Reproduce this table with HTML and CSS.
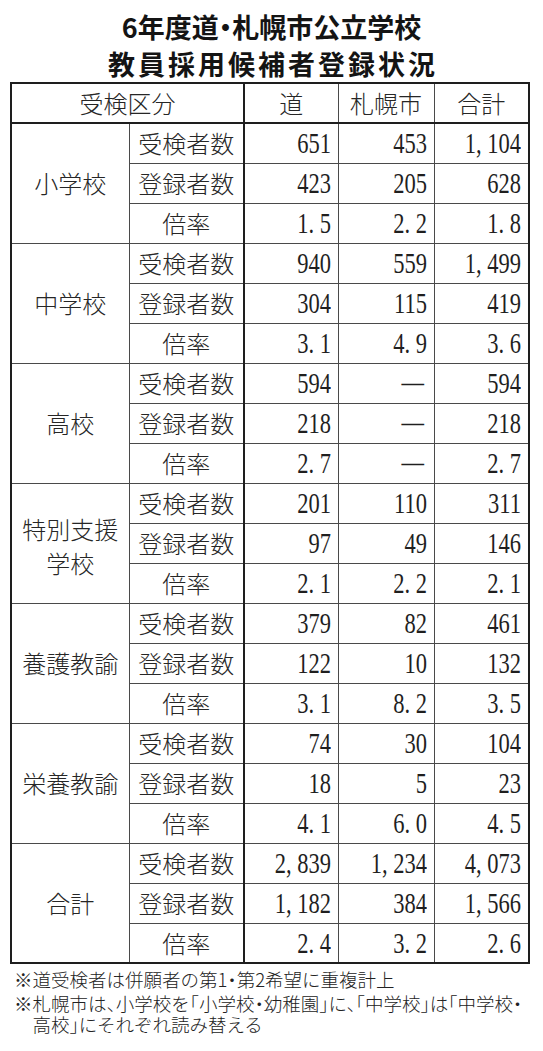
FILE: index.html
```html
<!DOCTYPE html>
<html lang="ja">
<head>
<meta charset="utf-8">
<title>6年度道・札幌市公立学校 教員採用候補者登録状況</title>
<link rel="stylesheet" href="styles.css">
</head>
<body>
<h1 class="title">
  <span class="title-line">6年度道・札幌市公立学校</span>
  <span class="title-line wide">教員採用候補者登録状況</span>
</h1>

<table class="stats">
  <colgroup>
    <col class="c-cat"><col class="c-sub"><col class="c-do"><col class="c-city"><col class="c-sum">
  </colgroup>
  <thead>
    <tr><th colspan="2">受検区分</th><th>道</th><th>札幌市</th><th>合計</th></tr>
  </thead>
  <tbody>
    <tr><th rowspan="3" class="cat">小学校</th><th class="sub">受検者数</th><td><span class="n">651</span></td><td><span class="n">453</span></td><td><span class="n">1<span class="p">,</span>104</span></td></tr>
    <tr><th class="sub">登録者数</th><td><span class="n">423</span></td><td><span class="n">205</span></td><td><span class="n">628</span></td></tr>
    <tr><th class="sub">倍率</th><td><span class="n">1<span class="p">.</span>5</span></td><td><span class="n">2<span class="p">.</span>2</span></td><td><span class="n">1<span class="p">.</span>8</span></td></tr>
  </tbody>
  <tbody>
    <tr><th rowspan="3" class="cat">中学校</th><th class="sub">受検者数</th><td><span class="n">940</span></td><td><span class="n">559</span></td><td><span class="n">1<span class="p">,</span>499</span></td></tr>
    <tr><th class="sub">登録者数</th><td><span class="n">304</span></td><td><span class="n">115</span></td><td><span class="n">419</span></td></tr>
    <tr><th class="sub">倍率</th><td><span class="n">3<span class="p">.</span>1</span></td><td><span class="n">4<span class="p">.</span>9</span></td><td><span class="n">3<span class="p">.</span>6</span></td></tr>
  </tbody>
  <tbody>
    <tr><th rowspan="3" class="cat">高校</th><th class="sub">受検者数</th><td><span class="n">594</span></td><td class="none"><span class="n dash">—</span></td><td><span class="n">594</span></td></tr>
    <tr><th class="sub">登録者数</th><td><span class="n">218</span></td><td class="none"><span class="n dash">—</span></td><td><span class="n">218</span></td></tr>
    <tr><th class="sub">倍率</th><td><span class="n">2<span class="p">.</span>7</span></td><td class="none"><span class="n dash">—</span></td><td><span class="n">2<span class="p">.</span>7</span></td></tr>
  </tbody>
  <tbody>
    <tr><th rowspan="3" class="cat cat-two">特別支援<br>学校</th><th class="sub">受検者数</th><td><span class="n">201</span></td><td><span class="n">110</span></td><td><span class="n">311</span></td></tr>
    <tr><th class="sub">登録者数</th><td><span class="n">97</span></td><td><span class="n">49</span></td><td><span class="n">146</span></td></tr>
    <tr><th class="sub">倍率</th><td><span class="n">2<span class="p">.</span>1</span></td><td><span class="n">2<span class="p">.</span>2</span></td><td><span class="n">2<span class="p">.</span>1</span></td></tr>
  </tbody>
  <tbody>
    <tr><th rowspan="3" class="cat">養護教諭</th><th class="sub">受検者数</th><td><span class="n">379</span></td><td><span class="n">82</span></td><td><span class="n">461</span></td></tr>
    <tr><th class="sub">登録者数</th><td><span class="n">122</span></td><td><span class="n">10</span></td><td><span class="n">132</span></td></tr>
    <tr><th class="sub">倍率</th><td><span class="n">3<span class="p">.</span>1</span></td><td><span class="n">8<span class="p">.</span>2</span></td><td><span class="n">3<span class="p">.</span>5</span></td></tr>
  </tbody>
  <tbody>
    <tr><th rowspan="3" class="cat">栄養教諭</th><th class="sub">受検者数</th><td><span class="n">74</span></td><td><span class="n">30</span></td><td><span class="n">104</span></td></tr>
    <tr><th class="sub">登録者数</th><td><span class="n">18</span></td><td><span class="n">5</span></td><td><span class="n">23</span></td></tr>
    <tr><th class="sub">倍率</th><td><span class="n">4<span class="p">.</span>1</span></td><td><span class="n">6<span class="p">.</span>0</span></td><td><span class="n">4<span class="p">.</span>5</span></td></tr>
  </tbody>
  <tbody>
    <tr><th rowspan="3" class="cat">合計</th><th class="sub">受検者数</th><td><span class="n">2<span class="p">,</span>839</span></td><td><span class="n">1<span class="p">,</span>234</span></td><td><span class="n">4<span class="p">,</span>073</span></td></tr>
    <tr><th class="sub">登録者数</th><td><span class="n">1<span class="p">,</span>182</span></td><td><span class="n">384</span></td><td><span class="n">1<span class="p">,</span>566</span></td></tr>
    <tr><th class="sub">倍率</th><td><span class="n">2<span class="p">.</span>4</span></td><td><span class="n">3<span class="p">.</span>2</span></td><td><span class="n">2<span class="p">.</span>6</span></td></tr>
  </tbody>
</table>

<div class="notes">
  <p class="note">※道受検者は併願者の第1・第2希望に重複計上</p>
  <p class="note">※札幌市は、小学校を「小学校・幼稚園」に、「中学校」は「中学校・<br>高校」にそれぞれ読み替える</p>
</div>
</body>
</html>
```

FILE: styles.css
```css
* {
  box-sizing: border-box;
}

html,
body {
  margin: 0;
  padding: 0;
  background: #ffffff;
}

body {
  width: 543px;
  font-family: "Noto Sans CJK JP", "Noto Sans", sans-serif;
  color: #1d1d1d;
}

/* ---------- title ---------- */
.title {
  margin: 0;
  padding-top: 8px;
  height: 82px;
  text-align: center;
  font-size: 27px;
  font-weight: 700;
  line-height: 37px;
  color: #141414;
  font-feature-settings: "halt";
}

.title-line {
  display: block;
}

.title-line.wide {
  letter-spacing: 3px;
  text-indent: 3px;
}

/* ---------- table ---------- */
.stats {
  margin-left: 10px;
  width: 518px;
  table-layout: fixed;
  border-collapse: collapse;
  border: 2px solid #1e1e1e;
}

.c-cat { width: 118px; }
.c-sub { width: 115px; }
.c-do { width: 94px; }
.c-city { width: 96px; }
.c-sum { width: 95px; }

.stats th,
.stats td {
  height: 40px;
  padding: 0;
  border: 1px solid #4a4a4a;
  vertical-align: middle;
}

.stats th {
  font-size: 24px;
  font-weight: 300;
  line-height: 34px;
  text-align: center;
  color: #262626;
}

.stats thead th {
  border-bottom: 2px solid #1e1e1e;
}

.stats thead th:first-child,
.stats .sub {
  border-right: 2px solid #1e1e1e;
}

.stats .cat-two {
  padding-top: 6px;
}

.stats td {
  text-align: right;
  padding-right: 7px;
  font-family: "Liberation Serif", "Times New Roman", serif;
  font-size: 30px;
  line-height: 1;
  color: #1f1f1f;
}

.stats td.none {
  padding-right: 10px;
}

.n {
  display: inline-block;
  transform: scaleX(0.75);
  transform-origin: right center;
  white-space: nowrap;
}

.p {
  display: inline-block;
  width: 0.5em;
  text-align: left;
}

.dash {
  vertical-align: 3px;
}

/* ---------- notes ---------- */
.notes {
  padding: 5px 0 0 14px;
}

.note {
  margin: 0 0 3px;
  padding-left: 1em;
  text-indent: -1em;
  font-size: 18.5px;
  line-height: 21px;
  font-weight: 300;
  color: #222222;
  font-feature-settings: "halt";
  white-space: nowrap;
}
```
